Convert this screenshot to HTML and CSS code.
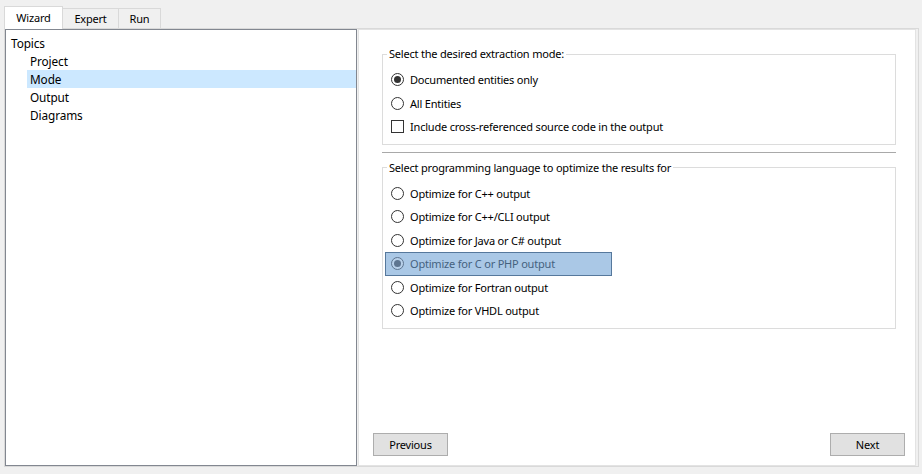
FILE: index.html
```html
<!DOCTYPE html>
<html>
<head>
<meta charset="utf-8">
<link rel="stylesheet" href="styles.css">
</head>
<body>
<div class="window">
  <div class="tabbar">
    <div class="tab active w-wizard">Wizard</div>
    <div class="tab w-expert">Expert</div>
    <div class="tab w-run">Run</div>
  </div>
  <div class="pane">
    <div class="tree">
      <div class="node root">Topics</div>
      <div class="node child">Project</div>
      <div class="node child selected">Mode</div>
      <div class="node child">Output</div>
      <div class="node child">Diagrams</div>
    </div>
    <div class="page">
      <div class="content">
        <fieldset class="group">
          <legend>Select the desired extraction mode:</legend>
          <div class="row"><span class="radio checked"></span><span>Documented entities only</span></div>
          <div class="row"><span class="radio"></span><span>All Entities</span></div>
          <div class="row"><span class="check"></span><span>Include cross-referenced source code in the output</span></div>
        </fieldset>
        <div class="sep"></div>
        <fieldset class="group">
          <legend>Select programming language to optimize the results for</legend>
          <div class="row"><span class="radio"></span><span>Optimize for C++ output</span></div>
          <div class="row"><span class="radio"></span><span>Optimize for C++/CLI output</span></div>
          <div class="row"><span class="radio"></span><span>Optimize for Java or C# output</span></div>
          <div class="row hl"><span class="radio checked"></span><span>Optimize for C or PHP output</span></div>
          <div class="row"><span class="radio"></span><span>Optimize for Fortran output</span></div>
          <div class="row"><span class="radio"></span><span>Optimize for VHDL output</span></div>
        </fieldset>
      </div>
      <div class="buttons">
        <button class="btn">Previous</button>
        <button class="btn">Next</button>
      </div>
    </div>
  </div>
</div>
</body>
</html>
```

FILE: styles.css
```css
html, body {
  margin: 0;
  padding: 0;
  background: #f0f0f0;
  font-family: "Noto Sans", "Open Sans", sans-serif;
  font-size: 11px;
  letter-spacing: -0.2px;
  color: #000;
}

.window {
  padding-left: 4px;
}

.tabbar {
  display: flex;
  align-items: flex-end;
  height: 28px;
}

.tab {
  box-sizing: border-box;
  height: 20px;
  border: 1px solid #d9d9d9;
  border-bottom: none;
  background: #f0f0f0;
  display: flex;
  align-items: center;
  justify-content: center;
  margin-left: -1px;
}

.tab:first-child {
  margin-left: 0;
}

.tab.active {
  height: 23px;
  background: #fff;
  margin-bottom: -1px;
  position: relative;
  z-index: 1;
  padding-bottom: 2px;
}

.w-wizard { width: 59px; }
.w-expert { width: 57px; }
.w-run { width: 43px; }

.pane {
  box-sizing: border-box;
  width: 915px;
  height: 439px;
  border: 1px solid #d9d9d9;
  background: #f0f0f0;
  display: flex;
}

.tree {
  box-sizing: border-box;
  width: 352px;
  background: #fff;
  border: 1px solid #828790;
  padding-top: 4px;
  font-size: 11.8px;
  letter-spacing: -0.1px;
}

.node {
  height: 18px;
  line-height: 18px;
  white-space: nowrap;
}

.node.root {
  padding-left: 5px;
}

.node.child {
  margin-left: 21px;
  padding-left: 3px;
}

.node.selected {
  background: #cce8ff;
}

.page {
  flex: 1;
  margin-left: 1px;
  margin-right: 2px;
  background: #fff;
  border: 1px solid #e3e3e3;
  display: flex;
  flex-direction: column;
  justify-content: space-between;
}

.content {
  padding: 16px 19px 0 23px;
}

.group {
  margin: 0;
  padding: 6px 2px 5px 2px;
  border: 1px solid #dcdcdc;
}

.group legend {
  margin-left: 2px;
  padding: 0 2px;
  line-height: 16px;
}

.row {
  box-sizing: border-box;
  height: 23.5px;
  display: flex;
  align-items: center;
  padding-left: 6px;
  white-space: nowrap;
}

.radio {
  box-sizing: border-box;
  width: 13px;
  height: 13px;
  border: 1px solid #333;
  border-radius: 50%;
  background: #fff;
  margin-right: 6px;
  display: flex;
  align-items: center;
  justify-content: center;
  flex: none;
}

.radio.checked::after {
  content: "";
  width: 7px;
  height: 7px;
  border-radius: 50%;
  background: #333;
}

.check {
  box-sizing: border-box;
  width: 13px;
  height: 13px;
  border: 1px solid #333;
  background: #fff;
  margin-right: 6px;
  flex: none;
}

.row.hl {
  width: 227px;
  background: #aac8e6;
  border: 1px solid #56789c;
  padding-left: 5px;
  color: #45627f;
}

.row.hl .radio {
  border-color: #5e7590;
  background: #b8d0e9;
}

.row.hl .radio.checked::after {
  background: #5e7590;
}

.sep {
  height: 1px;
  background: #a9a9a9;
  margin: 7px 0 7px 0;
}

.buttons {
  display: flex;
  justify-content: space-between;
  padding: 0 10px 9px 14px;
}

.btn {
  box-sizing: border-box;
  width: 75px;
  height: 23px;
  background: #e1e1e1;
  border: 1px solid #adadad;
  font-family: "Noto Sans", "Open Sans", sans-serif;
  font-size: 11px;
  letter-spacing: -0.2px;
  color: #000;
  padding: 0;
  border-radius: 0;
}
```
